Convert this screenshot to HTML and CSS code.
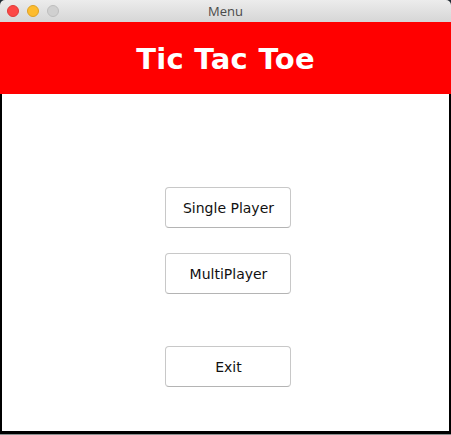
FILE: index.html
```html
<!DOCTYPE html>
<html>
<head>
<meta charset="utf-8">
<link rel="stylesheet" href="styles.css">
</head>
<body>
<div class="window">
  <div class="titlebar">
    <div class="lights">
      <span class="light red"></span>
      <span class="light yellow"></span>
      <span class="light grey"></span>
    </div>
    <div class="title">Menu</div>
  </div>
  <div class="header">Tic Tac Toe</div>
  <div class="content">
    <button class="btn">Single Player</button>
    <button class="btn second">MultiPlayer</button>
    <button class="btn exit">Exit</button>
  </div>
  <div class="bottom"></div>
</div>
</body>
</html>
```

FILE: styles.css
```css
html, body {
  margin: 0;
  padding: 0;
  background: #1e2a33;
}
.window {
  width: 451px;
  height: 435px;
  display: flex;
  flex-direction: column;
  background: #000;
  border-radius: 5px 5px 0 0;
  overflow: hidden;
}
.titlebar {
  height: 22px;
  flex: none;
  position: relative;
  background: linear-gradient(#ececec, #d6d6d6);
  display: flex;
  align-items: center;
  justify-content: center;
}
.lights {
  position: absolute;
  left: 7px;
  top: 5px;
  display: flex;
  gap: 8px;
}
.light {
  width: 12px;
  height: 12px;
  border-radius: 50%;
  box-sizing: border-box;
}
.red { background: #fc4745; border: 1px solid #de3a38; }
.yellow { background: #fdbc2e; border: 1px solid #dea123; }
.grey { background: #d0d0d0; border: 1px solid #bdbdbd; }
.title {
  font-family: "Open Sans", "Liberation Sans", sans-serif;
  font-size: 13px;
  color: #4a4a4a;
}
.header {
  height: 72px;
  flex: none;
  background: #ff0000;
  color: #fff;
  font-family: "DejaVu Sans", sans-serif;
  font-weight: bold;
  font-size: 29px;
  letter-spacing: 0.3px;
  display: flex;
  align-items: center;
  justify-content: center;
  padding-top: 2px;
  box-sizing: border-box;
}
.content {
  flex: 1;
  margin: 0 2px;
  background: #fff;
  display: flex;
  flex-direction: column;
  align-items: center;
  padding-top: 93px;
}
.btn {
  width: 126px;
  height: 41px;
  margin-left: 5px;
  background: #fff;
  border: 1px solid #c8c8c8;
  border-bottom-color: #b4b4b4;
  border-radius: 4px;
  font-family: "DejaVu Sans", sans-serif;
  font-size: 14px;
  color: #111;
  padding: 0 0 0 1px;
}
.second { margin-top: 25px; }
.exit { margin-top: 52px; }
.bottom {
  height: 4px;
  flex: none;
  background: #000;
  border-bottom: 1px solid #8a8e8e;
  box-sizing: border-box;
}
```
